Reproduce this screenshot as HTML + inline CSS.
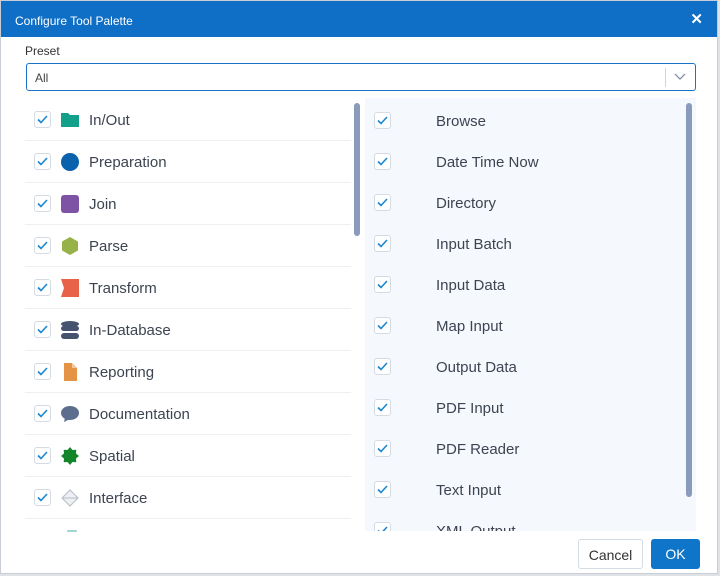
<!DOCTYPE html><html><head><style>
*{box-sizing:border-box;margin:0;padding:0}
body{width:720px;height:576px;background:#dfe3e8;font-family:"Liberation Sans",sans-serif;position:relative;overflow:hidden}
.win{position:absolute;left:0;top:0;width:718px;height:574px;background:#fff;border:1px solid #c9ced6}
.title{position:absolute;left:0;top:0;width:716px;height:36px;background:#0f6fc6;color:#fff;font-size:12px;padding:13px 0 0 14px}
.x{position:absolute;right:14px;top:9px;font-size:15px;font-weight:bold}
.lbl{position:absolute;left:24px;top:43px;font-size:12px;color:#333}
.sel{position:absolute;left:25px;top:62px;width:670px;height:28px;border:1px solid #1a73c8;border-radius:3px;font-size:12px;color:#444;padding:7px 0 0 8px}
.sel .sep{position:absolute;right:29px;top:4px;width:1px;height:19px;background:#d0d4da}
.row{position:absolute;left:24px;width:326px;height:42px;border-bottom:1px solid #eef0f3;font-size:15px;color:#3d4451}
.cb{position:absolute;left:9px;top:12px;width:17px;height:17px;border:1px solid #d5dbe3;border-radius:3px;background:#fff}
.cb svg{position:absolute;left:2px;top:3px}
.ic{position:absolute;left:36px;top:12px;width:18px;height:18px}
.t{position:absolute;left:64px;top:13px}
.rp{position:absolute;left:364px;top:97px;width:331px;height:433px;background:#f5f8fd;overflow:hidden}
.rr{position:absolute;left:0;width:300px;height:41px;font-size:15px;color:#3d4451}
.rr .cb{left:9px;top:13px}
.rr .t{left:71px;top:14px}
.sb{position:absolute;width:6px;border-radius:3px;background:#8a9abb}
.btn{position:absolute;top:538px;height:30px;border-radius:3px;font-size:14px;text-align:center;padding-top:7px}
</style></head><body><div class="win">
<div class="title">Configure Tool Palette<span class="x">✕</span></div>
<div class="lbl">Preset</div>
<div class="sel">All<div class="sep"></div><svg style="position:absolute;right:9px;top:9px" width="12" height="8"><path d="M1 1L6 6L11 1" fill="none" stroke="#7a8699" stroke-width="1.2"/></svg></div>
<div class="sb" style="left:353px;top:102px;height:133px"></div>
<div id="L"></div>
<div class="rp" id="R"><div class="sb" style="left:321px;top:5px;height:394px"></div></div>
<div class="btn" style="left:577px;width:65px;border:1px solid #d5dbe3;color:#333;background:#fff">Cancel</div>
<div class="btn" style="left:650px;width:49px;background:#0f75c8;color:#fff">OK</div>
</div>
<script>
var ck='<div class="cb"><svg width="11" height="9"><path d="M1 4.5L4 7.5L10 1" fill="none" stroke="#1a86d0" stroke-width="1.6"/></svg></div>';
var ic=[
'<svg class="ic" viewBox="0 0 18 18"><path d="M0 2h7l2 2h9v12H0z" fill="#12a08a"/></svg>',
'<svg class="ic" viewBox="0 0 18 18"><circle cx="9" cy="9" r="9" fill="#0a62ad"/></svg>',
'<svg class="ic" viewBox="0 0 18 18"><rect width="18" height="18" rx="3" fill="#7e52a5"/></svg>',
'<svg class="ic" viewBox="0 0 18 18"><path d="M9 0l8 4.5v9L9 18l-8-4.5v-9z" fill="#97b249"/></svg>',
'<svg class="ic" viewBox="0 0 18 18"><path d="M0 0h18v18H0l3-9z" fill="#e8624a"/></svg>',
'<svg class="ic" viewBox="0 0 18 18"><ellipse cx="9" cy="3" rx="9" ry="3" fill="#45536f"/><rect y="5" width="18" height="5" rx="2.5" fill="#45536f"/><rect y="12" width="18" height="6" rx="3" fill="#45536f"/></svg>',
'<svg class="ic" viewBox="0 0 18 18"><path d="M3 0h8l5 5v13H3z" fill="#e59346"/><path d="M11 0v5h5" fill="#f4c49a"/></svg>',
'<svg class="ic" viewBox="0 0 18 18"><ellipse cx="9" cy="8" rx="9" ry="7" fill="#5d6d8e"/><path d="M4 13l-1 4 6-3z" fill="#5d6d8e"/></svg>',
'<svg class="ic" viewBox="0 0 18 18"><path d="M9 0l2.5 3 3.8-.3-.3 3.8L18 9l-3 2.5.3 3.8-3.8-.3L9 18l-2.5-3-3.8.3.3-3.8L0 9l3-2.5-.3-3.8 3.8.3z" fill="#13862c"/></svg>',
'<svg class="ic" viewBox="0 0 18 18"><path d="M9 1l8 8-8 8-8-8z" fill="#eef0f3" stroke="#b5bcc7"/><path d="M1 9h16" stroke="#b5bcc7"/></svg>'];
var n=["In/Out","Preparation","Join","Parse","Transform","In-Database","Reporting","Documentation","Spatial","Interface"];
var h='';for(var i=0;i<10;i++)h+='<div class="row" style="top:'+(98+42*i)+'px">'+ck+ic[i]+'<span class="t">'+n[i]+'</span></div>';
h+='<div style="position:absolute;left:66px;top:529px;width:10px;height:2px;background:#9fd4d0;border-radius:2px"></div>';
document.getElementById('L').innerHTML=h;
var r=["Browse","Date Time Now","Directory","Input Batch","Input Data","Map Input","Output Data","PDF Input","PDF Reader","Text Input","XML Output"];
var s='';for(i=0;i<11;i++)s+='<div class="rr" style="top:'+(1+41*i)+'px">'+ck+'<span class="t">'+r[i]+'</span></div>';
document.getElementById('R').insertAdjacentHTML('beforeend',s);
</script></body></html>
